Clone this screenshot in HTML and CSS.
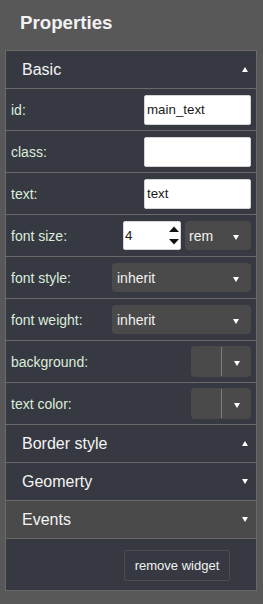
FILE: index.html
```html
<!DOCTYPE html>
<html>
<head>
<meta charset="utf-8">
<link rel="stylesheet" href="styles.css">
</head>
<body>
<div class="app">
  <h3 class="title">Properties</h3>
  <div class="panel">
    <div class="section-header"><span>Basic</span><span class="tri tri-up"></span></div>
    <div class="row"><span class="label">id:</span><input class="text-input" type="text" value="main_text"></div>
    <div class="row"><span class="label">class:</span><input class="text-input" type="text" value=""></div>
    <div class="row"><span class="label">text:</span><input class="text-input" type="text" value="text"></div>
    <div class="row">
      <span class="label">font size:</span>
      <div class="size-group">
        <div class="number-box">
          <input class="number-input" type="text" value="4">
          <svg class="spinner" width="10" height="29" viewBox="0 0 10 29"><path d="M5 5.5 L10 11 L0 11 Z" fill="#111"/><path d="M0 18 L10 18 L5 23.5 Z" fill="#111"/></svg>
        </div>
        <div class="select select-unit"><span>rem</span><span class="caret"></span></div>
      </div>
    </div>
    <div class="row"><span class="label">font style:</span><div class="select select-wide"><span>inherit</span><span class="caret"></span></div></div>
    <div class="row"><span class="label">font weight:</span><div class="select select-wide"><span>inherit</span><span class="caret"></span></div></div>
    <div class="row"><span class="label">background:</span><div class="color"><span class="swatch"></span><span class="color-btn"><span class="caret"></span></span></div></div>
    <div class="row"><span class="label">text color:</span><div class="color"><span class="swatch"></span><span class="color-btn"><span class="caret"></span></span></div></div>
    <div class="section-header"><span>Border style</span><span class="tri tri-up"></span></div>
    <div class="section-header"><span>Geomerty</span><span class="tri tri-down"></span></div>
    <div class="section-header section-active"><span>Events</span><span class="tri tri-down"></span></div>
    <div class="footer"><button class="remove-btn" type="button">remove widget</button></div>
  </div>
</div>
</body>
</html>
```

FILE: styles.css
```css
html, body {
  margin: 0;
  padding: 0;
  background: #585858;
  font-family: "Liberation Sans", Arial, sans-serif;
}

.app {
  padding: 12px 0 0 5px;
}

.title {
  margin: 0 0 16px 15px;
  font-size: 18.72px;
  line-height: 22px;
  font-weight: bold;
  color: #f2f2f2;
}

.panel {
  width: 250px;
  border: 1px solid #696969;
  background: #363941;
}

.section-header {
  height: 37px;
  display: flex;
  align-items: center;
  justify-content: space-between;
  padding: 0 8px 0 16px;
  color: #f4f4f4;
  font-size: 16px;
  border-bottom: 1px solid #696969;
}

.section-active {
  background: #4a4a4a;
}

.tri {
  width: 0;
  height: 0;
  border-left: 3.5px solid transparent;
  border-right: 3.5px solid transparent;
}

.tri-up {
  border-bottom: 5px solid #ffffff;
}

.tri-down {
  border-top: 5px solid #ffffff;
}

.row {
  height: 41px;
  display: flex;
  align-items: center;
  justify-content: space-between;
  padding: 0 5px;
  border-bottom: 1px solid #696969;
}

.label {
  color: #dcecdc;
  font-size: 14px;
}

.text-input {
  box-sizing: border-box;
  width: 107px;
  height: 30px;
  margin: 0;
  border: 1px solid #d4d4d4;
  border-radius: 2px;
  padding: 0 2px;
  background: #fff;
  color: #1a1a1a;
  font-family: "Liberation Sans", Arial, sans-serif;
  font-size: 13.33px;
  outline: none;
}

.size-group {
  display: flex;
  gap: 4px;
  align-items: center;
}

.number-box {
  box-sizing: border-box;
  width: 58px;
  height: 29px;
  display: flex;
  align-items: center;
  background: #fff;
  border: 1px solid #d4d4d4;
  border-radius: 2px;
  padding-right: 1px;
}

.number-input {
  flex: 1;
  min-width: 0;
  border: none;
  margin: 0;
  padding: 0 0 0 1px;
  background: transparent;
  color: #1a1a1a;
  font-family: "Liberation Sans", Arial, sans-serif;
  font-size: 13.33px;
  outline: none;
}

.spinner {
  display: block;
  flex: none;
}

.select {
  box-sizing: border-box;
  height: 29px;
  display: flex;
  align-items: center;
  justify-content: space-between;
  padding: 0 12px 0 5px;
  background: #4a4a4a;
  border-radius: 4px;
  color: #f2f2f2;
  font-size: 14px;
}

.select-unit {
  width: 66px;
  padding-left: 4px;
}

.select-wide {
  width: 139px;
}

.caret {
  width: 0;
  height: 0;
  margin-top: 3px;
  border-left: 3.5px solid transparent;
  border-right: 3.5px solid transparent;
  border-top: 5px solid #ffffff;
}

.color {
  box-sizing: border-box;
  width: 60px;
  height: 31px;
  display: flex;
  align-items: stretch;
  background: #4a4a4a;
  border-radius: 4px;
}

.swatch {
  width: 30px;
  border-right: 1px solid #7d7d7d;
  margin: 1px 0;
}

.color-btn {
  flex: 1;
  display: flex;
  align-items: center;
  justify-content: center;
}

.footer {
  height: 51px;
  display: flex;
  justify-content: flex-end;
  align-items: flex-start;
  padding: 11px 26px 0 0;
  box-sizing: border-box;
}

.remove-btn {
  box-sizing: border-box;
  width: 106px;
  height: 31px;
  margin: 0;
  padding: 0;
  background: #363941;
  border: 1px solid #4d4d4d;
  border-radius: 2px;
  color: #f2f2f2;
  font-family: "Liberation Sans", Arial, sans-serif;
  font-size: 13px;
}
```
